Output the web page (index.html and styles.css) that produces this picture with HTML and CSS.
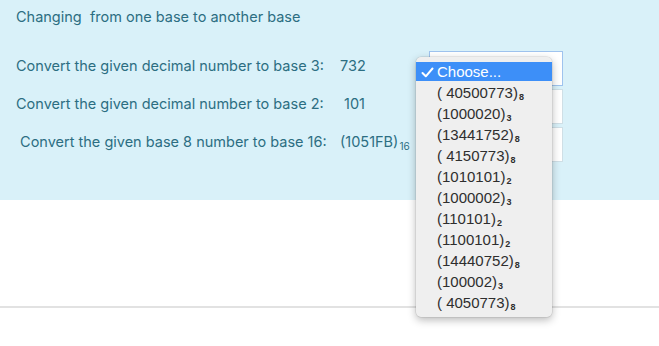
FILE: index.html
```html
<!DOCTYPE html>
<html>
<head>
<meta charset="utf-8">
<link rel="stylesheet" href="styles.css">
</head>
<body>
<div class="panel">
  <div class="title">Changing&nbsp; from one base to another base</div>
  <div class="rows">
    <div class="label">Convert the given decimal number to base 3:</div>
    <div class="value">732</div>
    <div class="box focus"></div>
    <div class="label">Convert the given decimal number to base 2:</div>
    <div class="value">&nbsp;101</div>
    <div class="box"></div>
    <div class="label">&nbsp;Convert the given base 8 number to base 16:</div>
    <div class="value">(1051FB)<sub class="sub">16</sub></div>
    <div class="box"></div>
  </div>
</div>
<div class="rule"></div>
<ul class="menu">
  <li class="item selected"><svg class="check" width="13" height="11" viewBox="0 0 13 11"><path d="M1.5 6 L4.8 9.3 L11.5 1.5" fill="none" stroke="#ffffff" stroke-width="2" stroke-linecap="round" stroke-linejoin="round"/></svg>Choose...</li>
  <li class="item">( 40500773)<sub class="msub">8</sub></li>
  <li class="item">(1000020)<sub class="msub">3</sub></li>
  <li class="item">(13441752)<sub class="msub">8</sub></li>
  <li class="item">( 4150773)<sub class="msub">8</sub></li>
  <li class="item">(1010101)<sub class="msub">2</sub></li>
  <li class="item">(1000002)<sub class="msub">3</sub></li>
  <li class="item">(110101)<sub class="msub">2</sub></li>
  <li class="item">(1100101)<sub class="msub">2</sub></li>
  <li class="item">(14440752)<sub class="msub">8</sub></li>
  <li class="item">(100002)<sub class="msub">3</sub></li>
  <li class="item">( 4050773)<sub class="msub">8</sub></li>
</ul>
</body>
</html>
```

FILE: styles.css
```css
html, body {
  margin: 0;
  padding: 0;
  background: #ffffff;
  font-family: "Liberation Sans", Arial, sans-serif;
}
.panel {
  background: #d9f1f9;
  height: 200px;
  box-sizing: border-box;
  padding: 8px 0 0 16px;
  color: #2c6e82;
  font-family: Inter, "Liberation Sans", sans-serif;
  font-size: 14.5px;
}
.title {
  line-height: 17px;
}
.rows {
  display: grid;
  grid-template-columns: 324px 89px 134px;
  grid-auto-rows: 35px;
  row-gap: 3px;
  margin-top: 26px;
}
.label, .value {
  line-height: 30px;
  white-space: pre;
}
.sub {
  font-size: 10px;
  vertical-align: -3px;
  line-height: 0;
  margin-left: 1px;
}
.box {
  background: #ffffff;
  border: 1px solid #cfdfe6;
  box-sizing: border-box;
}
.box.focus {
  border-color: #9fc3ee;
}
.rule {
  margin-top: 106px;
  height: 2px;
  background: #e2e2e2;
}
.menu {
  position: absolute;
  left: 416px;
  top: 57px;
  width: 136px;
  margin: 0;
  padding: 5px 0 3px;
  list-style: none;
  background: #efefef;
  border-radius: 5px;
  box-shadow: 0 3px 9px rgba(0, 0, 0, 0.28), 0 0 0 0.5px rgba(0, 0, 0, 0.12);
  font-size: 15px;
  color: #2e2e2e;
}
.item {
  height: 21px;
  line-height: 20px;
  padding-left: 21px;
  position: relative;
  white-space: pre;
}
.item.selected {
  background: #3d8ff8;
  color: #ffffff;
  height: 19px;
  line-height: 19px;
  margin-bottom: 2px;
}
.check {
  position: absolute;
  left: 5px;
  top: 5px;
}
.msub {
  font-size: 9px;
  font-weight: bold;
  vertical-align: -2px;
  line-height: 0;
  margin-left: 1px;
}
```
